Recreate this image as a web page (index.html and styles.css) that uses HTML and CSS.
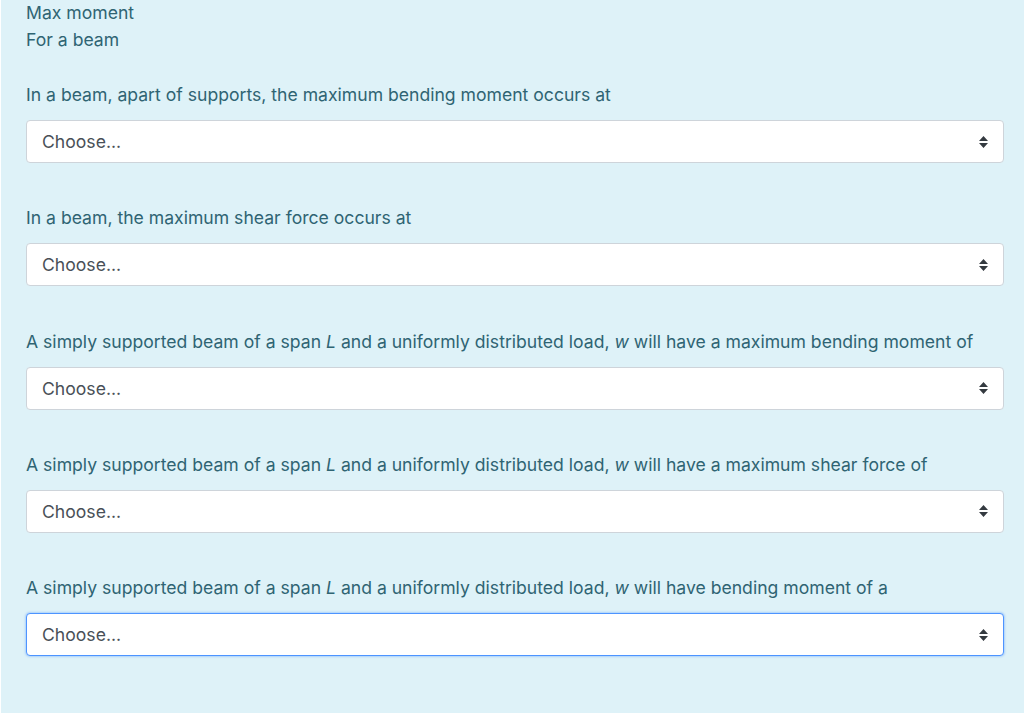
FILE: index.html
```html
<!DOCTYPE html>
<html lang="en">
<head>
    <meta charset="UTF-8">
    <title>Max moment</title>
    <link rel="stylesheet" href="styles.css">
</head>
<body>
    <div class="formulation">
        <div class="intro">
            <p>Max moment</p>
            <p>For a beam</p>
        </div>

        <div class="question">
            <p class="qtext">In a beam, apart of supports, the maximum bending moment occurs at</p>
            <div class="select">
                <span>Choose...</span>
                <svg class="caret" width="9" height="12" viewBox="0 0 9 12"><path d="M4.5 0L9 5H0zM4.5 12L0 7h9z"/></svg>
            </div>
        </div>

        <div class="question">
            <p class="qtext">In a beam, the maximum shear force occurs at</p>
            <div class="select">
                <span>Choose...</span>
                <svg class="caret" width="9" height="12" viewBox="0 0 9 12"><path d="M4.5 0L9 5H0zM4.5 12L0 7h9z"/></svg>
            </div>
        </div>

        <div class="question">
            <p class="qtext">A simply supported beam of a span <i>L</i> and a uniformly distributed load, <i>w</i> will have a maximum bending moment of</p>
            <div class="select">
                <span>Choose...</span>
                <svg class="caret" width="9" height="12" viewBox="0 0 9 12"><path d="M4.5 0L9 5H0zM4.5 12L0 7h9z"/></svg>
            </div>
        </div>

        <div class="question">
            <p class="qtext">A simply supported beam of a span <i>L</i> and a uniformly distributed load, <i>w</i> will have a maximum shear force of</p>
            <div class="select">
                <span>Choose...</span>
                <svg class="caret" width="9" height="12" viewBox="0 0 9 12"><path d="M4.5 0L9 5H0zM4.5 12L0 7h9z"/></svg>
            </div>
        </div>

        <div class="question">
            <p class="qtext">A simply supported beam of a span <i>L</i> and a uniformly distributed load, <i>w</i> will have bending moment of a</p>
            <div class="select focus">
                <span>Choose...</span>
                <svg class="caret" width="9" height="12" viewBox="0 0 9 12"><path d="M4.5 0L9 5H0zM4.5 12L0 7h9z"/></svg>
            </div>
        </div>
    </div>
</body>
</html>
```

FILE: styles.css
```css
body {
    margin: 0;
    background: #ffffff;
    font-family: Inter, "Open Sans", sans-serif;
    font-size: 17.6px;
    color: #2f6473;
}

.formulation {
    margin-left: 1px;
    min-height: 713px;
    box-sizing: border-box;
    background: #def2f8;
    padding: 0 20px 40px 25px;
}

p {
    margin: 0;
}

.intro {
    margin-top: -1px;
    padding-bottom: 27px;
}

.intro p {
    line-height: 27px;
}

.question {
    margin-bottom: 40.3px;
}

.qtext {
    line-height: 27px;
    padding-top: 1px;
    margin-bottom: 12px;
}

.select {
    height: 43px;
    box-sizing: border-box;
    display: flex;
    align-items: center;
    justify-content: space-between;
    padding: 0 15px;
    background: #ffffff;
    border: 1px solid #ced4da;
    border-radius: 4px;
    color: #495057;
}

/* focused control */
.select.focus {
    border-color: #4d94ff;
    box-shadow: 0 0 2px 1px rgba(77, 148, 255, 0.35);
}

.caret {
    fill: #343a40;
}
```
